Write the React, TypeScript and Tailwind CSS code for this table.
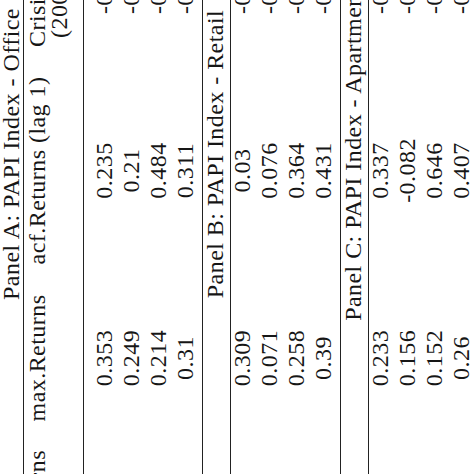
const COLS = "grid grid-cols-[87px_151px_156px_219px_171px_256px]";

type Row = [string, string, string, string, string, string];

const panelA: Row[] = [
  ["0.061", "-0.118", "0.353", "0.235", "-0.0412", "0.019"],
  ["0.048", "-0.093", "0.249", "0.21", "-0.0375", "0.022"],
  ["0.052", "-0.137", "0.214", "0.484", "-0.0291", "0.015"],
  ["0.057", "-0.101", "0.31", "0.311", "-0.0336", "0.018"],
];

const panelB: Row[] = [
  ["0.066", "-0.142", "0.309", "0.03", "-0.0508", "0.012"],
  ["0.039", "-0.087", "0.071", "0.076", "-0.0244", "0.009"],
  ["0.049", "-0.121", "0.258", "0.364", "-0.0317", "0.016"],
  ["0.058", "-0.109", "0.39", "0.431", "-0.0429", "0.021"],
];

const panelC: Row[] = [
  ["0.054", "-0.126", "0.233", "0.337", "-0.0363", "0.017"],
  ["0.041", "-0.098", "0.156", "-0.082", "-0.0218", "0.011"],
  ["0.045", "-0.104", "0.152", "0.646", "-0.0275", "0.014"],
  ["0.059", "-0.131", "0.26", "0.407", "-0.0394", "0.020"],
];

function DataRow({ row }: { row: Row }) {
  return (
    <div className={`${COLS} h-[27px] leading-[23px]`}>
      {row.map((v, i) => (
        <div key={i} className="text-center whitespace-nowrap">
          {v}
        </div>
      ))}
    </div>
  );
}

function PanelTitle({ title, first }: { title: string; first?: boolean }) {
  return (
    <div
      className={`border-b border-[#222] text-center whitespace-nowrap ${
        first ? "h-[24px] leading-[23px]" : "h-[28px] leading-[24px]"
      }`}
    >
      {title}
    </div>
  );
}

export default function App() {
  return (
    <div className="w-[474px] h-[474px] overflow-hidden bg-white">
      {/* table is laid out upright, then turned a quarter turn like the scanned page */}
      <div className="w-[1040px] origin-top-left [transform:translateY(674px)_rotate(-90deg)] font-['Liberation_Serif','Times_New_Roman',serif] text-[24px] tracking-[0.45px] text-[#161616]">
        <PanelTitle title="Panel A: PAPI Index - Office" first />

        {/* column headers */}
        <div className={`${COLS} h-[60px] border-b border-[#222] pt-[2px] leading-[22px]`}>
          <div className="text-center whitespace-nowrap">sd.Returns</div>
          <div className="text-center whitespace-nowrap">min.Returns</div>
          <div className="text-center whitespace-nowrap">max.Returns</div>
          <div className="text-center whitespace-nowrap">acf.Returns (lag 1)</div>
          <div className="text-center whitespace-nowrap">
            Crisis Returns
            <br />
            (2007-2009)
          </div>
          <div className="text-center whitespace-nowrap">
            Post-Crisis
            <br />
            (2010-2015)
          </div>
        </div>

        <div className="h-[119px] pt-[9px] border-b border-[#222]">
          {panelA.map((r, i) => (
            <DataRow key={i} row={r} />
          ))}
        </div>

        <PanelTitle title="Panel B: PAPI Index - Retail" />
        <div className="h-[110px] border-b border-[#222]">
          {panelB.map((r, i) => (
            <DataRow key={i} row={r} />
          ))}
        </div>

        <PanelTitle title="Panel C: PAPI Index - Apartment" />
        <div>
          {panelC.map((r, i) => (
            <DataRow key={i} row={r} />
          ))}
        </div>
      </div>
    </div>
  );
}
